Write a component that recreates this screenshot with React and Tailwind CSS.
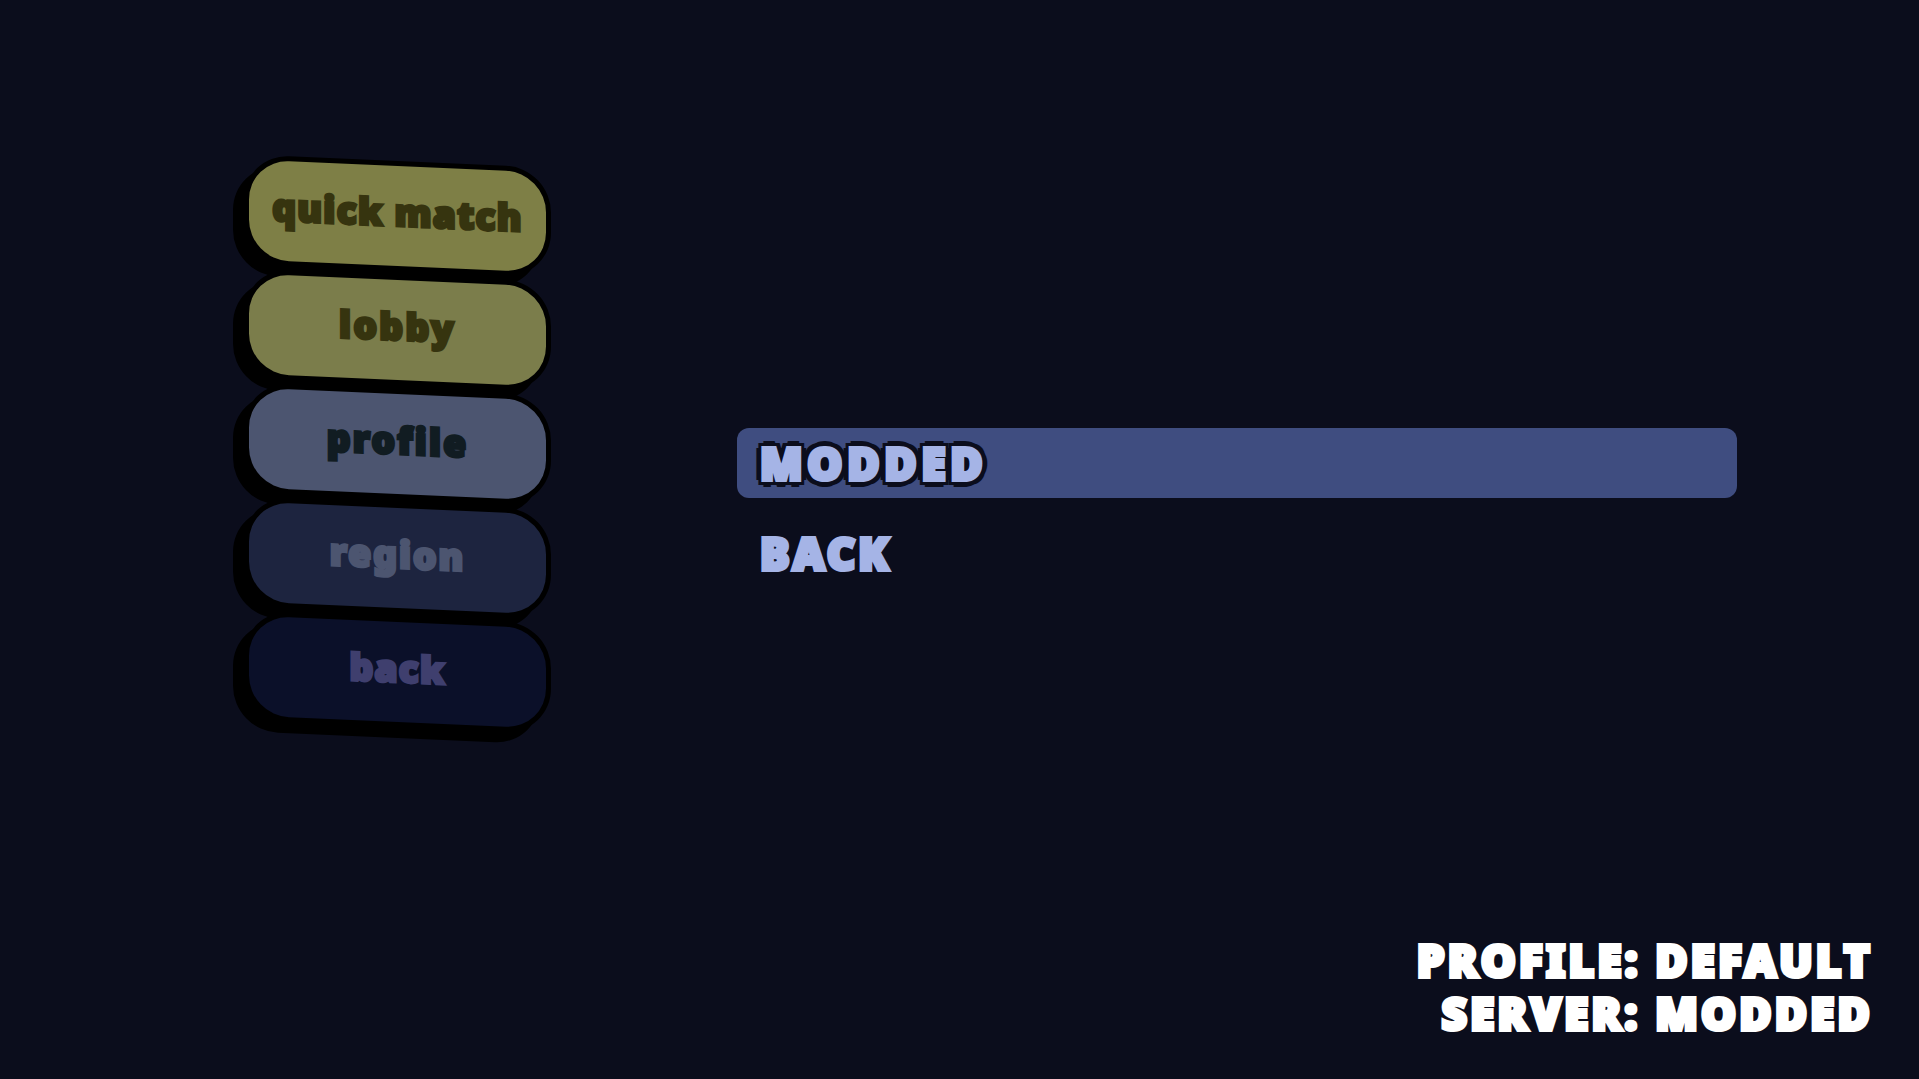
const buttons = [
  { label: 'quick match', bg: 'bg-[#7e7f46]', text: 'tracking-[1.3px] text-[#36340f] [-webkit-text-stroke:3px_#36340f]' },
  { label: 'lobby', bg: 'bg-[#7b7d4b]', text: 'tracking-[2.4px] text-[#36340f] [-webkit-text-stroke:3px_#36340f]' },
  { label: 'profile', bg: 'bg-[#4c5570]', text: 'tracking-[2.2px] text-[#111c22] [-webkit-text-stroke:3px_#111c22]' },
  { label: 'region', bg: 'bg-[#1d243f]', text: 'tracking-[2px] text-[#4c5570] [-webkit-text-stroke:3px_#4c5570]' },
  { label: 'back', bg: 'bg-[#0b1029]', text: 'tracking-[1.2px] text-[#3f3f6e] [-webkit-text-stroke:3px_#3f3f6e]' },
];

function MenuButton({ label, bg, text }) {
  return (
    <button
      className={`flex h-[100px] w-[297px] skew-y-[2.5deg] items-center justify-center rounded-[40px] pb-[10px] shadow-[0_0_0_5px_#000,-11px_11px_0_5px_#000] ${bg}`}
    >
      <span className={`text-[37px] leading-none font-black ${text}`}>{label}</span>
    </button>
  );
}

export default function App() {
  return (
    <div className="flex h-[1079px] w-full flex-col justify-between overflow-hidden bg-[#0b0d1c] font-['Noto_Sans',sans-serif]">
      <div className="flex pt-[166px] pl-[249px]">
        <div className="flex flex-col gap-[14px]">
          {buttons.map((b) => (
            <MenuButton key={b.label} {...b} />
          ))}
        </div>
        <div className="mt-[262px] ml-[191px] flex w-[1000px] flex-col gap-[30px]">
          <div className="flex h-[70px] items-center rounded-[12px] bg-[#3f4d80] px-[23px]">
            <span className="text-[44px] leading-none font-black tracking-[4.8px] text-[#a5b4e6] [-webkit-text-stroke:4px_#a5b4e6] [text-shadow:7px_0_0_#0b0d1c,-7px_0_0_#0b0d1c,0_7px_0_#0b0d1c,0_-7px_0_#0b0d1c,5px_5px_0_#0b0d1c,-5px_5px_0_#0b0d1c,5px_-5px_0_#0b0d1c,-5px_-5px_0_#0b0d1c,4px_0_0_#0b0d1c,-4px_0_0_#0b0d1c,0_4px_0_#0b0d1c,0_-4px_0_#0b0d1c]">
              MODDED
            </span>
          </div>
          <div className="flex h-[50px] items-center px-[23px]">
            <span className="text-[44px] leading-none font-black tracking-[3px] text-[#a5b4e6] [-webkit-text-stroke:4px_#a5b4e6]">
              BACK
            </span>
          </div>
        </div>
      </div>
      <div className="flex flex-col items-end pr-[46px] pb-[39px] text-[44px] leading-[53px] font-black tracking-[3.2px] text-white [-webkit-text-stroke:4px_#fff]">
        <span>PROFILE: DEFAULT</span>
        <span>SERVER: MODDED</span>
      </div>
    </div>
  );
}
